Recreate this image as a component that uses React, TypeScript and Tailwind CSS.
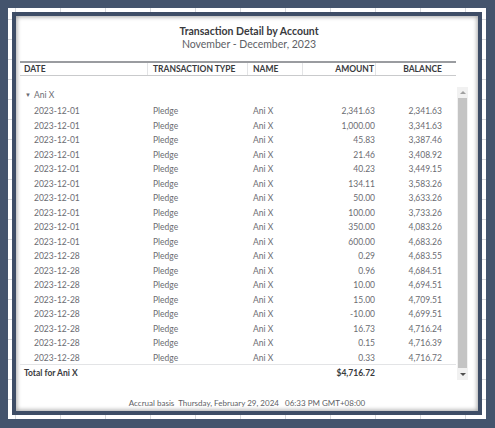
import React from "react";

const rows: [string, string, string][] = [
  ["2023-12-01", "2,341.63", "2,341.63"],
  ["2023-12-01", "1,000.00", "3,341.63"],
  ["2023-12-01", "45.83", "3,387.46"],
  ["2023-12-01", "21.46", "3,408.92"],
  ["2023-12-01", "40.23", "3,449.15"],
  ["2023-12-01", "134.11", "3,583.26"],
  ["2023-12-01", "50.00", "3,633.26"],
  ["2023-12-01", "100.00", "3,733.26"],
  ["2023-12-01", "350.00", "4,083.26"],
  ["2023-12-01", "600.00", "4,683.26"],
  ["2023-12-28", "0.29", "4,683.55"],
  ["2023-12-28", "0.96", "4,684.51"],
  ["2023-12-28", "10.00", "4,694.51"],
  ["2023-12-28", "15.00", "4,709.51"],
  ["2023-12-28", "-10.00", "4,699.51"],
  ["2023-12-28", "16.73", "4,716.24"],
  ["2023-12-28", "0.15", "4,716.39"],
  ["2023-12-28", "0.33", "4,716.72"],
];

function Scrollbar() {
  return (
    <div className="w-[11px] ml-[1px] mt-[11px] h-[293px] bg-[#f1f1f1] flex flex-col items-center">
      <div className="h-[10px] w-full flex items-center justify-center">
        <div className="w-0 h-0 border-x-[3px] border-x-transparent border-b-[3px] border-b-[#a0a0a0]" />
      </div>
      <div className="w-[9px] mt-[1px] flex-1 bg-[#c4c4c4]" />
      <div className="h-[12px] w-full flex items-center justify-center">
        <div className="w-0 h-0 border-x-[3px] border-x-transparent border-t-[3px] border-t-[#505050]" />
      </div>
    </div>
  );
}

export default function App() {
  return (
    <div
      className="w-[495px] h-[428px] bg-[#44546d] pt-[8px] pl-[8px] text-[#393a3d]"
      style={{ fontFamily: "Lato, 'Open Sans', sans-serif" }}
    >
      <div className="w-[478px] h-[411px] p-[4px] bg-white bg-[repeating-linear-gradient(90deg,transparent_0_7px,#d6d8dc_7px_8px,transparent_8px_45px),repeating-linear-gradient(0deg,transparent_0_19px,#d6d8dc_19px_20px)]">
        <div className="w-full h-full bg-[#3e4d66] p-[4px]">
          <div className="w-full h-full bg-white shadow-[inset_0_0_4px_1px_rgba(0,0,0,0.35)] pl-[4px] flex flex-col">
            <div className="pt-[8px] text-center">
              <div className="text-[10.5px] font-bold leading-[14px]">Transaction Detail by Account</div>
              <div className="text-[10.5px] leading-[13px] text-[#5e5f66]">November - December, 2023</div>
            </div>
            <div className="w-[436px] mt-[10px] border-t-[2px] border-[#9a9ca0] border-b border-b-[#c9cacc] h-[15px] flex text-[8.5px] font-bold uppercase leading-[12px]">
              <div className="w-[128px] pl-[4px] border-r border-[#e3e4e6]">Date</div>
              <div className="w-[100px] pl-[5px] border-r border-[#e3e4e6]">Transaction Type</div>
              <div className="w-[55px] pl-[5px] border-r border-[#e3e4e6]">Name</div>
              <div className="w-[73px] text-right pr-[1px] border-r border-[#e3e4e6]">Amount</div>
              <div className="w-[80px] text-right pr-[14px]">Balance</div>
            </div>
            <div className="flex">
              <div className="w-[436px] text-[8.5px] text-[#6b6c72]">
                <div className="h-[28px] pt-[12px] pl-[5px] flex items-start leading-[14px]">
                  <span className="text-[6px] mr-[3px]">▼</span>
                  <span>Ani X</span>
                </div>
                {rows.map(([d, a, b], i) => (
                  <div
                    key={i}
                    className={`flex h-[14.5px] leading-[14.5px] ${i === rows.length - 1 ? "border-b border-[#e3e4e6]" : ""}`}
                  >
                    <div className="w-[128px] pl-[14px]">{d}</div>
                    <div className="w-[100px] pl-[5px]">Pledge</div>
                    <div className="w-[55px] pl-[5px]">Ani X</div>
                    <div className="w-[73px] text-right pr-[1px]">{a}</div>
                    <div className="w-[80px] text-right pr-[14px]">{b}</div>
                  </div>
                ))}
                <div className="flex h-[16px] leading-[16px] font-bold text-[#393a3d]">
                  <div className="w-[283px] pl-[4px]">Total for Ani X</div>
                  <div className="w-[73px] text-right pr-[1px]">$4,716.72</div>
                </div>
              </div>
              <Scrollbar />
            </div>
            <div className="mt-auto mb-[2px] pr-[4px] text-center text-[8px] text-[#5e5f66] leading-[12px]">
              Accrual basis&nbsp;&nbsp;Thursday, February 29, 2024&nbsp;&nbsp;&nbsp;06:33 PM GMT+08:00
            </div>
          </div>
        </div>
      </div>
    </div>
  );
}
